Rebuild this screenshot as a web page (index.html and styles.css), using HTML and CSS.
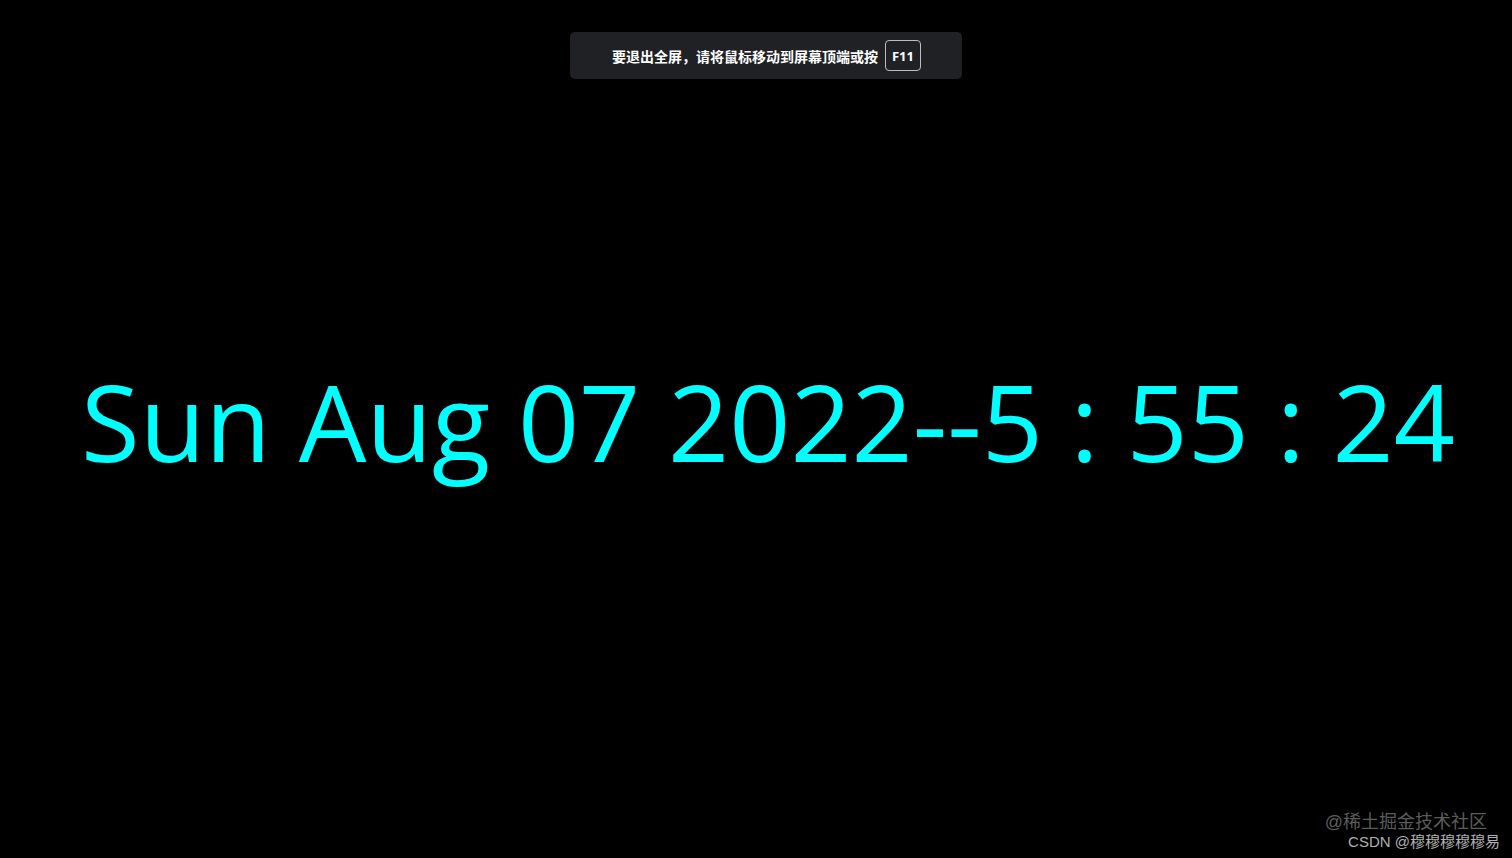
FILE: index.html
```html
<!DOCTYPE html>
<html lang="zh">
<head>
<meta charset="utf-8">
<link rel="stylesheet" href="styles.css">
</head>
<body>
<div class="toast">
  <span class="toast-text">要退出全屏，请将鼠标移动到屏幕顶端或按</span>
  <span class="key">F11</span>
</div>
<main class="stage">
  <div class="clock">Sun Aug 07 2022--5 : 55 : 24</div>
</main>
<div class="watermark">
  <div class="wm-line1">@稀土掘金技术社区</div>
  <div class="wm-line2">CSDN @穆穆穆穆穆易</div>
</div>
</body>
</html>
```
FILE: styles.css
```css
html, body {
  margin: 0;
  padding: 0;
  background: #000;
  width: 1512px;
  height: 858px;
  overflow: hidden;
}
body {
  position: relative;
  font-family: "Open Sans", "Noto Sans CJK SC", sans-serif;
}
.toast {
  position: absolute;
  left: 570px;
  top: 32px;
  width: 392px;
  height: 47px;
  box-sizing: border-box;
  background: #202124;
  border-radius: 5px;
  display: flex;
  align-items: center;
  justify-content: center;
  gap: 7px;
  color: #fff;
  font-family: "Noto Sans CJK SC", sans-serif;
  font-weight: 700;
  font-size: 14px;
  letter-spacing: 0;
  padding-left: 1px;
}
.key {
  font-family: "Open Sans", "Noto Sans", sans-serif;
  font-weight: 700;
  font-size: 13px;
  border: 1px solid #bdbdbd;
  border-radius: 4px;
  padding: 0 6px;
  height: 31px;
  min-width: 35px;
  justify-content: center;
  box-sizing: border-box;
  display: flex;
  align-items: center;
}
.stage {
  height: 858px;
  box-sizing: border-box;
  padding-left: 24px;
  padding-bottom: 18px;
  display: flex;
  align-items: center;
  justify-content: center;
}
.clock {
  color: #00ffff;
  font-family: "Open Sans", sans-serif;
  font-size: 107px;
  white-space: nowrap;
}
.watermark {
  position: absolute;
  right: 12px;
  bottom: 6px;
  text-align: right;
  font-family: "Liberation Sans", "Noto Sans CJK SC", sans-serif;
  line-height: 20px;
}
.wm-line1 {
  color: #5c5c5c;
  font-size: 18px;
  margin-right: 13px;
}
.wm-line2 {
  color: #b0b0b0;
  font-size: 15px;
}
```
